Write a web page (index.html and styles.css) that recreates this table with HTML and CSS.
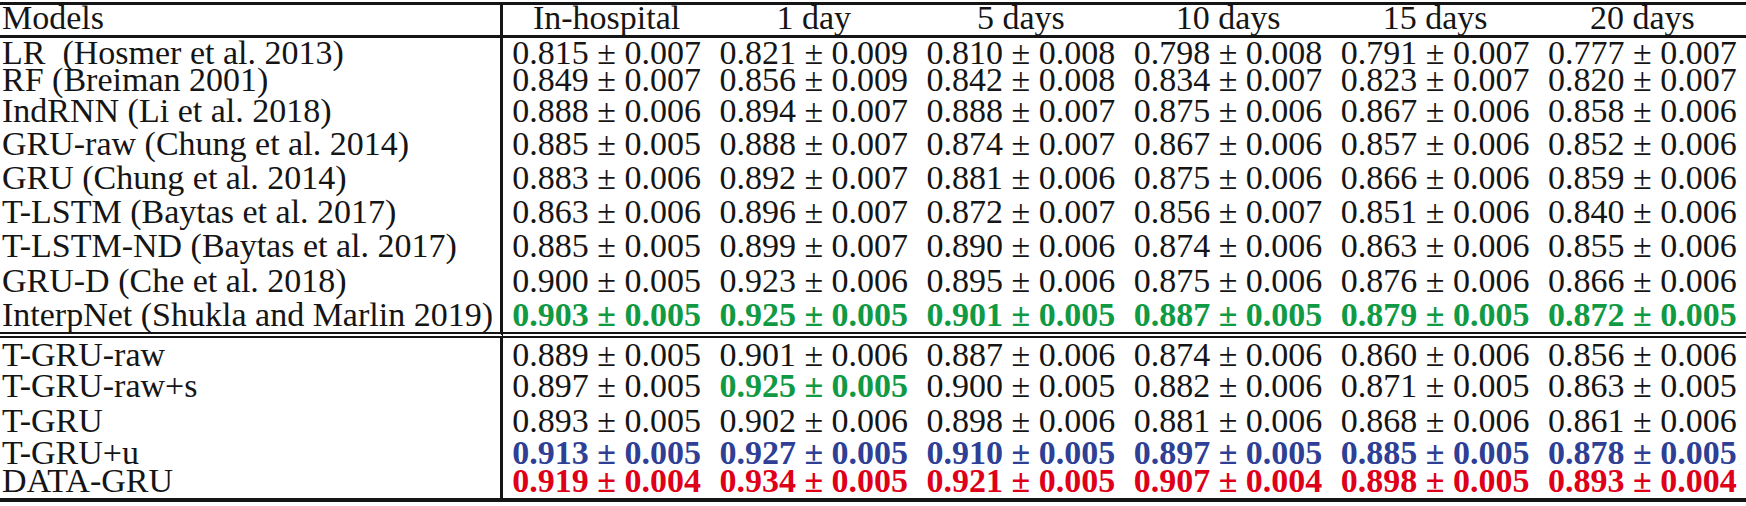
FILE: index.html
```html
<!DOCTYPE html>
<html lang="en">
<head>
    <meta charset="UTF-8">
    <meta name="viewport" content="width=device-width, initial-scale=1.0">
    <title>Mortality prediction AUC</title>
    <link rel="stylesheet" href="styles.css">
</head>
<body>
    <table class="results">
        <thead>
            <tr>
                <th class="model">Models</th>
                <th>In-hospital</th>
                <th>1 day</th>
                <th>5 days</th>
                <th>10 days</th>
                <th>15 days</th>
                <th>20 days</th>
            </tr>
        </thead>
        <tbody class="baselines">
            <tr><td class="model">LR&nbsp; (Hosmer et al. 2013)</td><td>0.815 ± 0.007</td><td>0.821 ± 0.009</td><td>0.810 ± 0.008</td><td>0.798 ± 0.008</td><td>0.791 ± 0.007</td><td>0.777 ± 0.007</td></tr>
            <tr><td class="model">RF (Breiman 2001)</td><td>0.849 ± 0.007</td><td>0.856 ± 0.009</td><td>0.842 ± 0.008</td><td>0.834 ± 0.007</td><td>0.823 ± 0.007</td><td>0.820 ± 0.007</td></tr>
            <tr><td class="model">IndRNN (Li et al. 2018)</td><td>0.888 ± 0.006</td><td>0.894 ± 0.007</td><td>0.888 ± 0.007</td><td>0.875 ± 0.006</td><td>0.867 ± 0.006</td><td>0.858 ± 0.006</td></tr>
            <tr><td class="model">GRU-raw (Chung et al. 2014)</td><td>0.885 ± 0.005</td><td>0.888 ± 0.007</td><td>0.874 ± 0.007</td><td>0.867 ± 0.006</td><td>0.857 ± 0.006</td><td>0.852 ± 0.006</td></tr>
            <tr><td class="model">GRU (Chung et al. 2014)</td><td>0.883 ± 0.006</td><td>0.892 ± 0.007</td><td>0.881 ± 0.006</td><td>0.875 ± 0.006</td><td>0.866 ± 0.006</td><td>0.859 ± 0.006</td></tr>
            <tr><td class="model">T-LSTM (Baytas et al. 2017)</td><td>0.863 ± 0.006</td><td>0.896 ± 0.007</td><td>0.872 ± 0.007</td><td>0.856 ± 0.007</td><td>0.851 ± 0.006</td><td>0.840 ± 0.006</td></tr>
            <tr><td class="model">T-LSTM-ND (Baytas et al. 2017)</td><td>0.885 ± 0.005</td><td>0.899 ± 0.007</td><td>0.890 ± 0.006</td><td>0.874 ± 0.006</td><td>0.863 ± 0.006</td><td>0.855 ± 0.006</td></tr>
            <tr><td class="model">GRU-D (Che et al. 2018)</td><td>0.900 ± 0.005</td><td>0.923 ± 0.006</td><td>0.895 ± 0.006</td><td>0.875 ± 0.006</td><td>0.876 ± 0.006</td><td>0.866 ± 0.006</td></tr>
            <tr><td class="model">InterpNet (Shukla and Marlin 2019)</td><td class="best">0.903 ± 0.005</td><td class="best">0.925 ± 0.005</td><td class="best">0.901 ± 0.005</td><td class="best">0.887 ± 0.005</td><td class="best">0.879 ± 0.005</td><td class="best">0.872 ± 0.005</td></tr>
        </tbody>
        <tbody class="ours">
            <tr><td class="model">T-GRU-raw</td><td>0.889 ± 0.005</td><td>0.901 ± 0.006</td><td>0.887 ± 0.006</td><td>0.874 ± 0.006</td><td>0.860 ± 0.006</td><td>0.856 ± 0.006</td></tr>
            <tr><td class="model">T-GRU-raw+s</td><td>0.897 ± 0.005</td><td class="best">0.925 ± 0.005</td><td>0.900 ± 0.005</td><td>0.882 ± 0.006</td><td>0.871 ± 0.005</td><td>0.863 ± 0.005</td></tr>
            <tr><td class="model">T-GRU</td><td>0.893 ± 0.005</td><td>0.902 ± 0.006</td><td>0.898 ± 0.006</td><td>0.881 ± 0.006</td><td>0.868 ± 0.006</td><td>0.861 ± 0.006</td></tr>
            <tr><td class="model">T-GRU+u</td><td class="second">0.913 ± 0.005</td><td class="second">0.927 ± 0.005</td><td class="second">0.910 ± 0.005</td><td class="second">0.897 ± 0.005</td><td class="second">0.885 ± 0.005</td><td class="second">0.878 ± 0.005</td></tr>
            <tr><td class="model">DATA-GRU</td><td class="top">0.919 ± 0.004</td><td class="top">0.934 ± 0.005</td><td class="top">0.921 ± 0.005</td><td class="top">0.907 ± 0.004</td><td class="top">0.898 ± 0.005</td><td class="top">0.893 ± 0.004</td></tr>
        </tbody>
    </table>
</body>
</html>
```

FILE: styles.css
```css
body { margin: 0; padding-top: 2px; background: #fff; color: #151515; font-family: "Liberation Serif", "Times New Roman", serif; }

.results { width: 100%; table-layout: fixed; border-collapse: separate; border-spacing: 0; font-size: 34px; }
.results th, .results td { box-sizing: border-box; padding: 0 2px 10.5px; line-height: 14px; vertical-align: bottom; text-align: center; font-weight: normal; white-space: nowrap; }
.results .model { width: 503px; text-align: left; border-right: 3px solid #151515; }

.results thead th { height: 36px; padding-bottom: 10px; border-top: 3px solid #151515; border-bottom: 3px solid #151515; }

/* row heights follow the uneven spacing of the typeset table */
.baselines tr:nth-child(1) td { height: 32px; }
.baselines tr:nth-child(2) td { height: 27px; }
.baselines tr:nth-child(3) td { height: 31px; }
.baselines tr:nth-child(4) td { height: 33px; }
.baselines tr:nth-child(5) td { height: 34px; }
.baselines tr:nth-child(6) td { height: 34px; }
.baselines tr:nth-child(7) td { height: 34px; }
.baselines tr:nth-child(8) td { height: 35px; }
.baselines tr:nth-child(9) td { height: 40px; border-bottom: 6px double #151515; }

.ours tr:nth-child(1) td { height: 34px; }
.ours tr:nth-child(2) td { height: 31px; }
.ours tr:nth-child(3) td { height: 35px; }
.ours tr:nth-child(4) td { height: 32px; }
.ours tr:nth-child(5) td { height: 32px; border-bottom: 4px solid #151515; }

.results td.best { color: #0f9a43; font-weight: bold; }
.results td.second { color: #2e3f95; font-weight: bold; }
.results td.top { color: #de0018; font-weight: bold; }
```
